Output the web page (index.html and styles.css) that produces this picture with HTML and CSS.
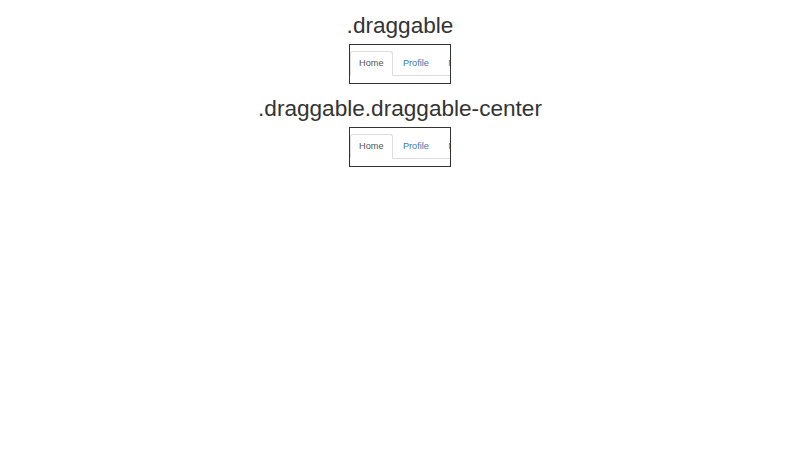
FILE: index.html
```
<!DOCTYPE html>
<html>
	<head>
		<meta charset="utf-8">
		<title>draggable tabs</title>
		<link rel="stylesheet" href="styles.css">
	</head>
	<body>
		<div class="demo">
			<h1 class="title">.draggable</h1>
			<div class="frame">
				<ul class="tabs draggable">
					<li class="active"><a href="#home">Home</a></li>
					<li><a href="#profile">Profile</a></li>
					<li><a href="#messages">Messages</a></li>
					<li><a href="#settings">Settings</a></li>
				</ul>
			</div>
		</div>
		<div class="demo">
			<h1 class="title">.draggable.draggable-center</h1>
			<div class="frame">
				<ul class="tabs draggable draggable-center">
					<li class="active"><a href="#home">Home</a></li>
					<li><a href="#profile">Profile</a></li>
					<li><a href="#messages">Messages</a></li>
					<li><a href="#settings">Settings</a></li>
				</ul>
			</div>
		</div>
	</body>
</html>
```
FILE: styles.css
```
body {
  margin: 0;
  padding-top: 1px;
  background: #fff;
  color: #333;
  font-family: "Liberation Sans", Helvetica, Arial, sans-serif;
  text-align: center;
}

.title {
  margin: 0;
  padding: 12px 0 6px;
  font-size: 22.6px;
  font-weight: 400;
  line-height: 25px;
  color: #333;
}

.frame {
  width: 100px;
  margin: 0 auto;
  padding: 6px 0 7px;
  border: 1px solid #333;
  overflow: hidden;
  text-align: left;
}

/*** Tabs **/

.tabs {
  display: flex;
  flex-wrap: nowrap;
  margin: 0;
  padding: 0;
  list-style: none;
  border-bottom: 1px solid #ddd;
  white-space: nowrap;
}

.tabs li {
  flex: none;
  margin: 0 1.4px -1px 0;
}

.tabs a {
  display: block;
  padding: 5px 8px;
  border: 1px solid transparent;
  border-radius: 3px 3px 0 0;
  font-size: 9.2px;
  line-height: 13px;
  color: #3b7bb0;
  text-decoration: none;
}

.tabs li.active a {
  color: #555;
  background: #fff;
  border-color: #ddd;
  border-bottom-color: transparent;
}
```
